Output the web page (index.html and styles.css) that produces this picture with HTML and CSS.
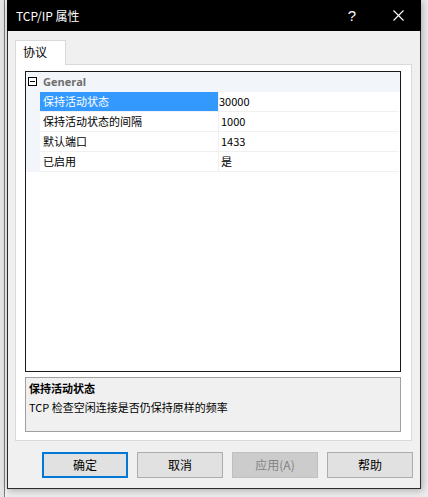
FILE: index.html
```html
<!DOCTYPE html>
<html lang="zh-CN">
<head>
<meta charset="utf-8">
<title>TCP/IP 属性</title>
<link rel="stylesheet" href="styles.css">
</head>
<body>
<div class="backdrop"></div>
<div class="window">
  <div class="titlebar">
    <span class="title">TCP/IP 属性</span>
    <span class="tb-btn help">?</span>
    <span class="tb-btn close"><svg width="11" height="11" viewBox="0 0 11 11"><path d="M0.5 0.5L10.5 10.5M10.5 0.5L0.5 10.5" stroke="#fff" stroke-width="1.1" fill="none"/></svg></span>
  </div>
  <div class="client">
    <div class="tabs"><div class="tab">协议</div></div>
    <div class="panel">
      <div class="grid">
        <div class="cat"><span class="margin"><span class="expander"></span></span><span class="cat-name">General</span></div>
        <div class="row selected"><span class="margin"></span><span class="label">保持活动状态</span><span class="value">30000</span></div>
        <div class="row"><span class="margin"></span><span class="label">保持活动状态的间隔</span><span class="value">1000</span></div>
        <div class="row"><span class="margin"></span><span class="label">默认端口</span><span class="value">1433</span></div>
        <div class="row"><span class="margin"></span><span class="label">已启用</span><span class="value">是</span></div>
      </div>
      <div class="desc">
        <div class="desc-title">保持活动状态</div>
        <div class="desc-text">TCP 检查空闲连接是否仍保持原样的频率</div>
      </div>
    </div>
    <div class="buttons">
      <button class="btn default">确定</button>
      <button class="btn">取消</button>
      <button class="btn disabled">应用(A)</button>
      <button class="btn">帮助</button>
    </div>
  </div>
</div>
</body>
</html>
```

FILE: styles.css
```css
* { box-sizing: border-box; }

html, body {
  margin: 0;
  padding: 0;
}

body {
  width: 428px;
  height: 497px;
  overflow: hidden;
  display: flex;
  align-items: flex-start;
  background: #ebebeb;
  font-family: "Noto Sans CJK SC", "Noto Sans", sans-serif;
  color: #000;
}

.backdrop {
  width: 7px;
  height: 497px;
  flex: none;
  background: linear-gradient(to right, #e4e4e4 0 4px, #7c7c7c 4px 5px, #f2f2f2 5px 7px);
}

.window {
  width: 414px;
  height: 489px;
  flex: none;
  border: 1px solid #2b2b2b;
  border-top: 0;
  background: #f0f0f0;
  box-shadow: 1px 1px 7px rgba(0, 0, 0, 0.3);
  display: flex;
  flex-direction: column;
}

.titlebar {
  height: 31px;
  flex: none;
  background: #000;
  color: #fff;
  display: flex;
  align-items: center;
  margin: 0 -1px;
  padding-left: 9px;
}

.title {
  flex: 1;
  font-size: 12px;
  line-height: 16px;
}

.tb-btn {
  width: 46px;
  height: 31px;
  display: flex;
  align-items: center;
  justify-content: center;
}

.help {
  font-family: "Liberation Sans", sans-serif;
  font-size: 15px;
  padding-bottom: 1px;
}

.client {
  flex: 1;
  display: flex;
  flex-direction: column;
  padding: 9px 8px 0 7px;
}

.tabs {
  display: flex;
  height: 24px;
  position: relative;
  z-index: 1;
}

.tab {
  width: 51px;
  height: 25px;
  border: 1px solid #d9d9d9;
  border-bottom: 0;
  background: #fff;
  font-size: 12px;
  line-height: 22px;
  padding-left: 7px;
}

.panel {
  height: 377px;
  border: 1px solid #d9d9d9;
  background: #fff;
  padding: 6px 10px 8px 9px;
  display: flex;
  flex-direction: column;
  gap: 5px;
}

.grid {
  height: 301px;
  border: 1px solid #1a1a1a;
  background: #fff;
  font-size: 11px;
}

.row {
  display: grid;
  grid-template-columns: 14px 179px 180px;
  height: 20px;
}

.cat {
  height: 20px;
  background: #f2f5fa;
  display: flex;
  align-items: center;
}

.margin {
  background: #f2f5fa;
  display: block;
  width: 14px;
  height: 100%;
  position: relative;
  flex: none;
}

.expander {
  position: absolute;
  left: 2px;
  top: 5px;
  width: 9px;
  height: 9px;
  border: 1px solid #000;
  background: #fff;
}

.expander::after {
  content: "";
  position: absolute;
  left: 1px;
  top: 3px;
  width: 5px;
  height: 1px;
  background: #000;
}

.cat-name {
  font-family: "Open Sans", sans-serif;
  font-weight: 700;
  font-size: 11px;
  color: #6d6d6d;
  padding-left: 3px;
  line-height: 20px;
}

.label, .value {
  display: block;
  line-height: 19px;
  height: 20px;
  border-bottom: 1px solid #f0f0f0;
  white-space: nowrap;
  overflow: hidden;
}

.label {
  padding-left: 3px;
  border-right: 1px solid #f0f0f0;
}

.value {
  padding-left: 2px;
}

.selected .label {
  background: #3399ff;
  color: #fff;
}

.selected .value {
  padding-left: 0;
}

.desc {
  height: 55px;
  border: 1px solid #a0a0a0;
  background: #f0f0f0;
  padding: 3px 3px 0 3px;
  font-size: 11px;
}

.desc-title {
  font-weight: 700;
  line-height: 15px;
}

.desc-text {
  line-height: 15px;
  margin-top: 4px;
}

.buttons {
  display: flex;
  justify-content: flex-end;
  gap: 9px;
  margin-top: 11px;
  margin-right: -1px;
}

.btn {
  width: 86px;
  height: 26px;
  border: 1px solid #adadad;
  background: #e1e1e1;
  font-family: "Noto Sans CJK SC", sans-serif;
  font-size: 12px;
  color: #000;
  padding: 0;
  line-height: 22px;
}

.btn.default {
  border: 2px solid #0078d7;
}

.btn.disabled {
  background: #cccccc;
  border-color: #bfbfbf;
  color: #838383;
}
```
